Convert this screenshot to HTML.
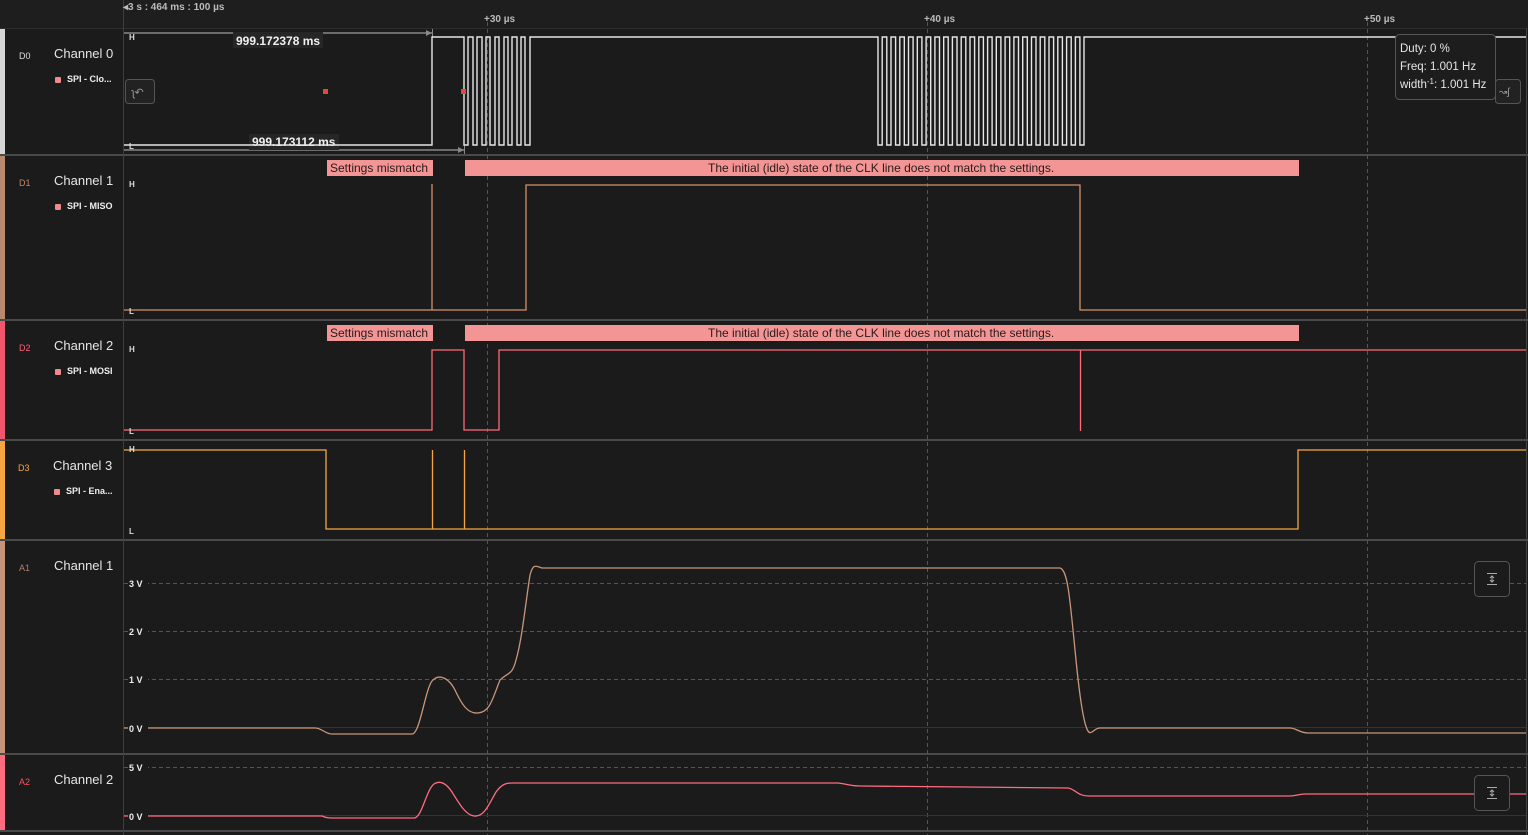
<!DOCTYPE html>
<html><head><meta charset="utf-8"><style>
html,body{margin:0;padding:0;background:#1b1b1b;width:1528px;height:835px;overflow:hidden;font-family:"Liberation Sans",sans-serif}
.abs{position:absolute}
.lbl{position:absolute;color:#e6e6e6;font-size:13px}
.tag{position:absolute;font-size:9px}
.sub{position:absolute;color:#eee;font-size:9px;font-weight:bold}
.dot{display:inline-block;width:6px;height:6px;background:#f08a8a;border-radius:1px;margin-right:6px;vertical-align:middle}
</style></head><body>
<svg class="abs" style="left:0;top:0" width="1528" height="835" xmlns="http://www.w3.org/2000/svg" font-family="Liberation Sans, sans-serif">
<rect x="0" y="0" width="1528" height="28" fill="#1e1e1e"/>
<line x1="0" y1="28.5" x2="1528" y2="28.5" stroke="#2e2e2e"/>
<!-- row separators -->
<g fill="#4a4a4a">
<rect x="0" y="154" width="1528" height="2"/>
<rect x="0" y="319" width="1528" height="2"/>
<rect x="0" y="439" width="1528" height="2"/>
<rect x="0" y="539" width="1528" height="2"/>
<rect x="0" y="753" width="1528" height="2"/>
<rect x="0" y="830" width="1528" height="2"/>
</g>
<line x1="123.5" y1="0" x2="123.5" y2="835" stroke="#3e3e3e"/>
<line x1="1526.5" y1="29" x2="1526.5" y2="835" stroke="#444"/>
<!-- left color bars -->
<rect x="0" y="29" width="5" height="125" fill="#d6d6d6"/>
<rect x="0" y="156" width="5" height="163" fill="#b78a70"/>
<rect x="0" y="321" width="5" height="118" fill="#f2566e"/>
<rect x="0" y="441" width="5" height="98" fill="#f5a742"/>
<rect x="0" y="541" width="5" height="212" fill="#c49479"/>
<rect x="0" y="755" width="5" height="75" fill="#ff6b80"/>
<!-- time grid -->
<g stroke="#555" stroke-dasharray="4,3">
<line x1="487.5" y1="22" x2="487.5" y2="835"/>
<line x1="927.5" y1="22" x2="927.5" y2="835"/>
<line x1="1367.5" y1="22" x2="1367.5" y2="835"/>
<line x1="124" y1="583.5" x2="1526" y2="583.5"/>
<line x1="124" y1="631.5" x2="1526" y2="631.5"/>
<line x1="124" y1="679.5" x2="1526" y2="679.5"/>
<line x1="124" y1="767.5" x2="1526" y2="767.5"/>
</g>
<line x1="124" y1="727.5" x2="1526" y2="727.5" stroke="#333"/>
<line x1="124" y1="815.5" x2="1526" y2="815.5" stroke="#333"/>
<g fill="#bbb" font-size="10" font-weight="bold">
<text x="123" y="10">◂3 s : 464 ms : 100 µs</text>
<text x="484" y="22">+30 µs</text>
<text x="924" y="22">+40 µs</text>
<text x="1364" y="22">+50 µs</text>
</g>
<!-- D0 -->
<line x1="124" y1="33" x2="432" y2="33" stroke="#888" stroke-width="1.5"/>
<path d="M426,30 L432,33 L426,36Z" fill="#888"/>
<line x1="124" y1="150" x2="464" y2="150" stroke="#888" stroke-width="1.5"/>
<path d="M458,147 L464,150 L458,153Z" fill="#888"/>
<line x1="432.5" y1="29" x2="432.5" y2="37" stroke="#888"/>
<line x1="464.5" y1="145" x2="464.5" y2="154" stroke="#888"/>
<rect x="233" y="32" width="90" height="16" fill="#262626"/>
<text x="236" y="45" fill="#f0f0f0" font-size="12" font-weight="bold">999.172378 ms</text>
<rect x="249" y="134" width="90" height="16" fill="#262626"/>
<text x="252" y="146" fill="#f0f0f0" font-size="12" font-weight="bold">999.173112 ms</text>
<path fill="none" stroke="#e6e6e6" stroke-width="1.4" d="M124,145 H432 V37 H464 V145 H468 V37 H473 V145 H477 V37 H482 V145 H486 V37 H490 V145 H495 V37 H499 V145 H504 V37 H508 V145 H512 V37 H517 V145 H521 V37 H525 V145 H530 V37 H878 V145 H882.2 V37 H886.8 V145 H891 V37 H895.6 V145 H899.8 V37 H904.3 V145 H908.5 V37 H913.1 V145 H917.3 V37 H921.9 V145 H926.1 V37 H930.7 V145 H934.9 V37 H939.5 V145 H943.7 V37 H948.2 V145 H952.4 V37 H957 V145 H961.2 V37 H965.8 V145 H970 V37 H974.6 V145 H978.8 V37 H983.4 V145 H987.6 V37 H992.1 V145 H996.3 V37 H1000.9 V145 H1005.1 V37 H1009.7 V145 H1013.9 V37 H1018.5 V145 H1022.7 V37 H1027.3 V145 H1031.5 V37 H1036 V145 H1040.2 V37 H1044.8 V145 H1049 V37 H1053.6 V145 H1057.8 V37 H1062.4 V145 H1066.6 V37 H1071.2 V145 H1075.4 V37 H1079.9 V145 H1084 V37 H1526"/>
<rect x="323" y="89" width="5" height="5" fill="#e04a3a"/>
<rect x="461" y="89" width="5" height="5" fill="#e04a3a"/>
<rect x="125.5" y="79.5" width="29" height="24" rx="3" fill="#222" stroke="#555"/>
<text x="132" y="96" fill="#999" font-size="11">ʅ↶</text>
<rect x="1395.5" y="34.5" width="100" height="65" rx="4" fill="#1d1d1d" stroke="#555"/>
<g fill="#e6e6e6" font-size="11.5"><text x="1400" y="52">Duty: 0 %</text><text x="1400" y="70">Freq: 1.001 Hz</text><text x="1400" y="88">width<tspan font-size="8" dy="-4">-1</tspan><tspan dy="4">: 1.001 Hz</tspan></text></g>
<rect x="1495.5" y="79.5" width="25" height="24" rx="3" fill="#222" stroke="#555"/>
<text x="1499" y="95" fill="#999" font-size="10">↝ʃ</text>
<!-- error labels -->
<g fill="#f49595">
<rect x="327" y="160" width="106" height="16"/><rect x="465" y="160" width="834" height="16"/>
<rect x="327" y="325" width="106" height="16"/><rect x="465" y="325" width="834" height="16"/>
</g>
<g fill="#2a1a1a" font-size="12">
<text x="330" y="172">Settings mismatch</text><text x="708" y="172">The initial (idle) state of the CLK line does not match the settings.</text>
<text x="330" y="337">Settings mismatch</text><text x="708" y="337">The initial (idle) state of the CLK line does not match the settings.</text>
</g>
<!-- D1 -->
<path fill="none" stroke="#d3916a" stroke-width="1.3" d="M124,310 H432 V184 V310 H526 V185 H1080 V310 H1526"/>
<!-- D2 -->
<path fill="none" stroke="#ff6b7a" stroke-width="1.3" d="M124,430 H432 V350 H464 V430 H499 V350 H1526 M1080.5,350 V431"/>
<!-- D3 -->
<path fill="none" stroke="#f5a742" stroke-width="1.3" d="M124,450 H326 V529 H1298 V450 H1526 M432.5,450 V529 M464.5,450 V529"/>
<!-- H/L markers -->
<g fill="#ddd" font-size="8" font-weight="bold">
<text x="129" y="40">H</text><text x="129" y="149">L</text>
<text x="129" y="187">H</text><text x="129" y="314">L</text>
<text x="129" y="352">H</text><text x="129" y="434">L</text>
<text x="129" y="452">H</text><text x="129" y="534">L</text>
</g>
<!-- A1 -->
<path fill="none" stroke="#c8977a" stroke-width="1.3" d="M124,728 H315 C322,728 325,734 332,734 H412 C420,734 425,690 432,681 C440,672 450,680 455,690 C462,705 468,714 478,713 C490,712 492,700 500,680 C508,672 512,676 516,660 C522,640 526,600 530,575 C533,563 536,566 542,568 L1060,568 C1068,570 1070,600 1076,660 C1080,700 1084,725 1088,731 C1091,736 1094,728 1100,728 H1290 C1296,728 1300,733 1308,733 H1526"/>
<!-- A2 -->
<path fill="none" stroke="#ff6b80" stroke-width="1.3" d="M124,816 H322 C326,818 330,818 336,818 H414 C422,818 426,790 434,784 C440,780 446,783 452,792 C460,805 466,815 474,816 C484,817 488,806 496,792 C502,784 506,783 512,783 H838 C848,784 850,786 860,786 L1068,788 C1075,789 1078,796 1088,796 H1290 C1296,796 1298,794 1306,794 H1526"/>
<g font-size="9" font-weight="bold" fill="#eee">
<rect x="128" y="577" width="20" height="12" fill="#1b1b1b"/><text x="129" y="587">3 V</text>
<rect x="128" y="625" width="20" height="12" fill="#1b1b1b"/><text x="129" y="635">2 V</text>
<rect x="128" y="673" width="20" height="12" fill="#1b1b1b"/><text x="129" y="683">1 V</text>
<rect x="128" y="722" width="20" height="12" fill="#1b1b1b"/><text x="129" y="732">0 V</text>
<rect x="128" y="761" width="20" height="12" fill="#1b1b1b"/><text x="129" y="771">5 V</text>
<rect x="128" y="810" width="20" height="12" fill="#1b1b1b"/><text x="129" y="820">0 V</text>
</g>
<g>
<rect x="1474.5" y="561.5" width="35" height="35" rx="4" fill="#1b1b1b" stroke="#555"/>
<path d="M1487,573.5 H1497 M1487,584.5 H1497 M1492,576 V582 M1490,578 L1492,576 L1494,578 M1490,580 L1492,582 L1494,580" stroke="#aaa" fill="none"/>
<rect x="1474.5" y="775.5" width="35" height="35" rx="4" fill="#1b1b1b" stroke="#555"/>
<path d="M1487,787.5 H1497 M1487,798.5 H1497 M1492,790 V796 M1490,792 L1492,790 L1494,792 M1490,794 L1492,796 L1494,794" stroke="#aaa" fill="none"/>
</g>
</svg>
<div class="tag" style="left:19px;top:51px;color:#ddd">D0</div>
<div class="lbl" style="left:54px;top:46px">Channel 0</div>
<div class="sub" style="left:55px;top:74px"><span class="dot"></span>SPI - Clo...</div>
<div class="tag" style="left:19px;top:178px;color:#c08a6a">D1</div>
<div class="lbl" style="left:54px;top:173px">Channel 1</div>
<div class="sub" style="left:55px;top:201px"><span class="dot"></span>SPI - MISO</div>
<div class="tag" style="left:19px;top:343px;color:#ff6070">D2</div>
<div class="lbl" style="left:54px;top:338px">Channel 2</div>
<div class="sub" style="left:55px;top:366px"><span class="dot"></span>SPI - MOSI</div>
<div class="tag" style="left:18px;top:463px;color:#f5a742">D3</div>
<div class="lbl" style="left:53px;top:458px">Channel 3</div>
<div class="sub" style="left:54px;top:486px"><span class="dot"></span>SPI - Ena...</div>
<div class="tag" style="left:19px;top:563px;color:#b08068">A1</div>
<div class="lbl" style="left:54px;top:558px">Channel 1</div>
<div class="tag" style="left:19px;top:777px;color:#ff5060">A2</div>
<div class="lbl" style="left:54px;top:772px">Channel 2</div>
</body></html>
